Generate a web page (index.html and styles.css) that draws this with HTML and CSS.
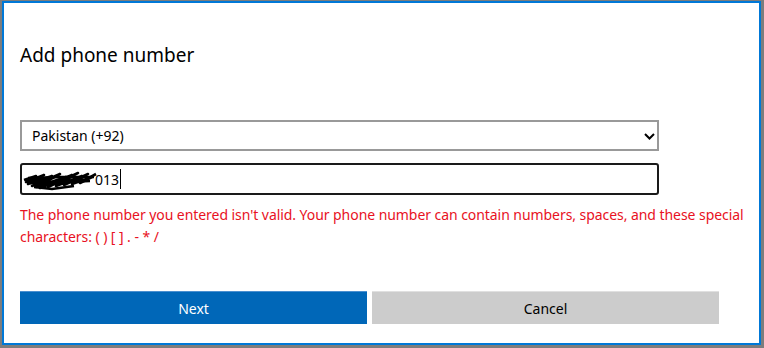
FILE: index.html
```html
<!DOCTYPE html>
<html lang="en">
<head>
<meta charset="utf-8">
<title>Add phone number</title>
<link rel="stylesheet" href="styles.css">
</head>
<body>
<div class="frame">
  <div class="dialog">
    <h1 class="title">Add phone number</h1>
    <div class="select">
      <span class="select-text">Pakistan (+92)</span>
      <svg class="chevron" width="11" height="7" viewBox="0 0 11 7"><path d="M1 1 L5.5 5.5 L10 1" fill="none" stroke="#000" stroke-width="2"/></svg>
    </div>
    <div class="phone">
      <svg class="scribble" width="75" height="24" viewBox="0 0 75 24">
        <path d="M2 12 L14 8 L4 14 L22 7 L6 16 L30 8 L10 18 L38 6 L14 19 L44 9 L18 20 L50 7 L26 19 L56 5 L34 18 L60 8 L42 17 L66 6 L50 16 L70 9 L58 15 L74 6" fill="none" stroke="#000" stroke-width="2.6" stroke-linejoin="round"/>
        <path d="M6 10 L40 9 L72 9 M8 15 L46 14 L68 13 M12 19 L30 21 L52 18" fill="none" stroke="#000" stroke-width="2.6"/>
      </svg>
      <span class="digits">013</span><span class="caret"></span>
    </div>
    <p class="error">The phone number you entered isn't valid. Your phone number can contain numbers, spaces, and these special characters: ( ) [ ] . - * /</p>
    <div class="actions">
      <button class="btn btn-primary">Next</button>
      <button class="btn btn-secondary">Cancel</button>
    </div>
  </div>
</div>
</body>
</html>
```
FILE: styles.css
```css
html, body {
  margin: 0;
  padding: 0;
}
body {
  background: #7d7d7d;
  width: 764px;
  height: 348px;
  overflow: hidden;
  font-family: "Noto Sans", "Open Sans", sans-serif;
}
.frame {
  box-sizing: border-box;
  margin: 1px 0 0 2px;
  width: 759px;
  height: 344px;
  border: 2px solid #0078d7;
  background: #fff;
}
.dialog {
  padding: 0 6px 0 16px;
}
.title {
  margin: 0;
  padding-top: 38px;
  font-size: 19px;
  font-weight: 400;
  line-height: 28px;
  color: #000;
}
.select {
  box-sizing: border-box;
  margin-top: 51px;
  width: 639px;
  height: 31px;
  border: 2px solid #999;
  display: flex;
  align-items: center;
  justify-content: space-between;
  padding: 0 2px 0 10px;
  font-size: 14px;
  color: #000;
}
.chevron {
  margin-top: 1px;
}
.phone {
  box-sizing: border-box;
  margin-top: 12px;
  width: 639px;
  height: 32px;
  border: 2px solid #1a1a1a;
  border-radius: 3px;
  display: flex;
  align-items: center;
  padding-left: 0;
  font-size: 14px;
  color: #000;
}
.scribble {
  margin-top: 2px;
}
.digits {
  margin-left: -2px;
}
.caret {
  display: inline-block;
  width: 1px;
  height: 20px;
  background: #000;
  margin-left: 1px;
}
.error {
  margin: 9px 0 0 0;
  color: #e81123;
  font-size: 14px;
  line-height: 22px;
  letter-spacing: -0.06px;
}
.actions {
  margin-top: 43px;
  width: 699px;
  display: flex;
  gap: 5px;
}
.btn {
  flex: 1;
  height: 33px;
  border: 0;
  font-family: inherit;
  font-size: 14px;
  padding: 0;
}
.btn-primary {
  background: #0067b8;
  color: #fff;
  border-top: 1px solid #4a8fd0;
}
.btn-secondary {
  background: #cccccc;
  color: #000;
  border-top: 1px solid #e0e0e0;
}
```
